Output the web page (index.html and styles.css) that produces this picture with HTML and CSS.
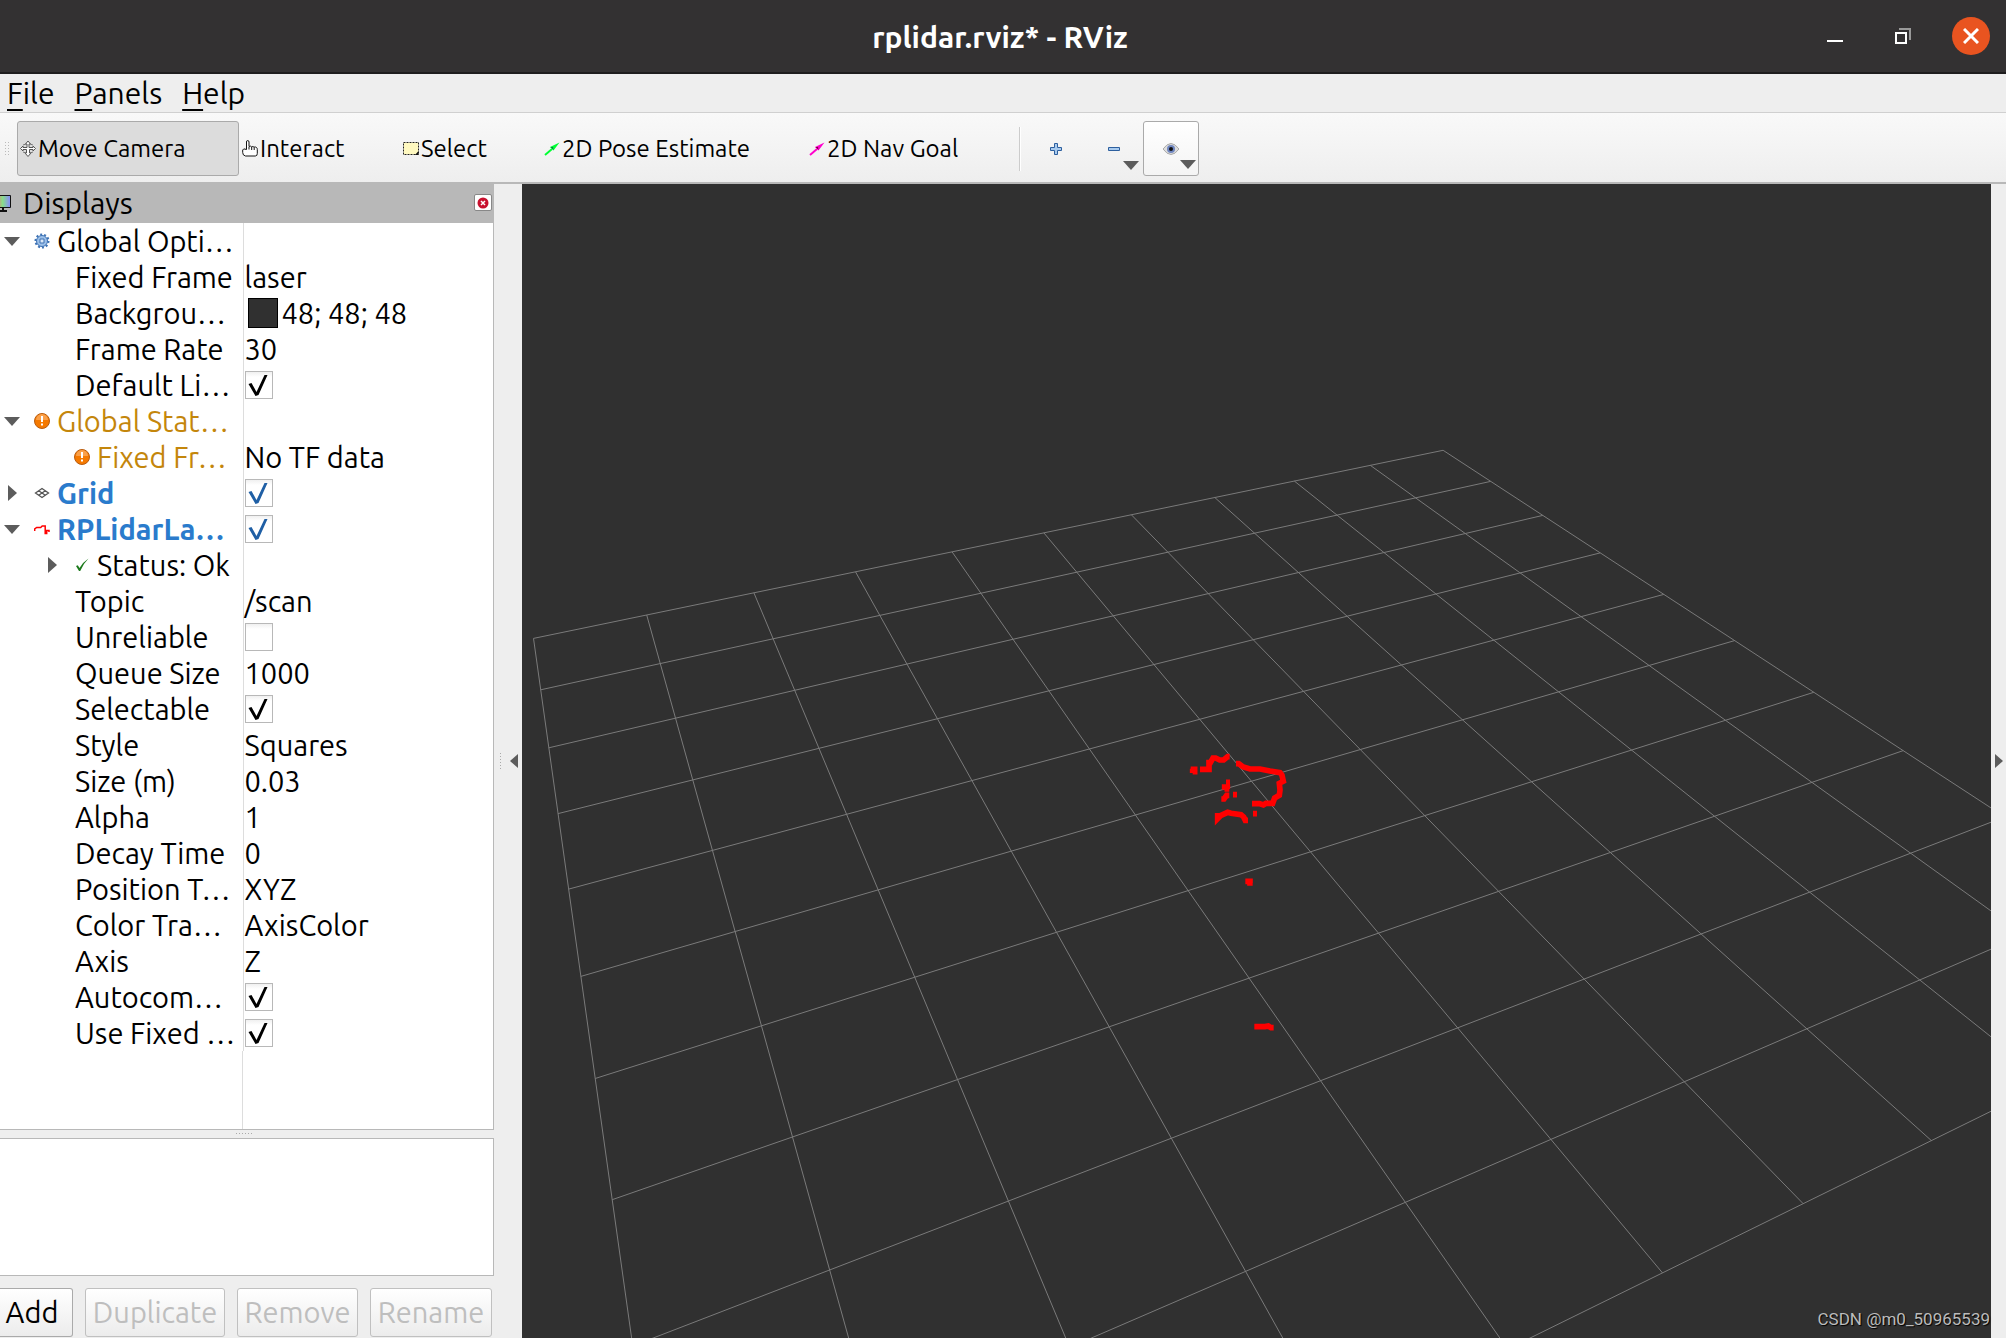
FILE: index.html
```html
<!DOCTYPE html>
<html lang="en">
<head>
<meta charset="utf-8">
<title>rplidar.rviz* - RViz</title>
<link rel="stylesheet" href="styles.css">
</head>
<body>
<header class="titlebar">
  <h1 class="title">rplidar.rviz* - RViz</h1>
  <div class="window-controls">
    <button class="win-btn" aria-label="Minimize"><svg width="16" height="16" viewBox="0 0 16 16"><path d="M0 13h16" stroke="#fff" stroke-width="2"/></svg></button>
    <button class="win-btn" aria-label="Restore"><svg width="16" height="16" viewBox="0 0 16 16" fill="none" stroke-width="2"><path d="M4 1h11v11" stroke="#999"/><path d="M1 5h10v10H1z" stroke="#fff"/></svg></button>
    <button class="win-btn win-close" aria-label="Close"><svg width="16" height="16" viewBox="0 0 16 16"><path d="M1 1l14 14M15 1L1 15" stroke="#fff" stroke-width="3"/></svg></button>
  </div>
</header>

<nav class="menubar">
  <button class="menu"><u>F</u>ile</button>
  <button class="menu"><u>P</u>anels</button>
  <button class="menu"><u>H</u>elp</button>
</nav>

<div class="toolbar" role="toolbar">
  <span class="toolbar-grip"></span>
  <button class="tool tool-move active"><svg class="tool-icon" viewBox="0 0 16 18"><path d="M8 1l2.500 3H9v3.500h4V6l2.500 2.500L13 11V9.500H9.500V13H11l-3 3.500L5 13h1.500V9.500H3V11L.5 8.500 3 6v1.500h4V4H5.500z" fill="#fff" stroke="#555"/><path d="M3 5l3-1M13 5l-3-1M3 12l3 1M13 12l-3 1" stroke="#777"/></svg>Move Camera</button>
  <button class="tool tool-interact"><svg class="tool-icon" viewBox="0 0 16 18"><path d="M4.500 9.500V2q0-1.500 1.200-1.500T7 2v4.500q1.400-1 2.500.3 1.400-.8 2.500.4 1.500-.6 2.500.3.800.7.800 2v4q0 2.500-2 2.500H3.500Q.7 15.500.7 12.500V10q.3-2 3.800-.5z" fill="#fff" stroke="#111"/><path d="M7 7v2.500m2.700-2.500v3m2.500-2.500V10" stroke="#111" fill="none"/></svg>Interact</button>
  <button class="tool tool-select"><svg class="tool-icon" viewBox="0 0 16 18"><path d="M.5 2.500h15v12H.5z" fill="#fff9c0" stroke="#222" stroke-dasharray="2 1"/><path d="M15.500 11v4H12z" fill="#111"/></svg>Select</button>
  <button class="tool tool-pose"><svg class="tool-icon" viewBox="0 0 16 18"><path d="M1 15l7-6" stroke="#0f3" stroke-width="2"/><path d="M15.500 2.500L6 7l3.500 3.500z" fill="#0f3"/><path d="M6.500 7l3 3-.5-3z" fill="#084"/></svg>2D Pose Estimate</button>
  <button class="tool tool-nav"><svg class="tool-icon" viewBox="0 0 16 18"><path d="M1 15l7-6" stroke="#f0c" stroke-width="2"/><path d="M15.500 2.500L6 7l3.500 3.500z" fill="#f0c"/><path d="M6.500 7l3 3-.5-3z" fill="#704"/></svg>2D Nav Goal</button>
  <span class="toolbar-sep"></span>
  <button class="icon-tool" aria-label="Add tool"><svg width="14" height="14" viewBox="0 0 14 14"><path d="M5.500 1.500h3v4h4v3h-4v4h-3v-4h-4v-3h4z" fill="#a8caee" stroke="#2d5f9e"/></svg></button>
  <button class="icon-tool" aria-label="Remove tool"><svg width="14" height="14" viewBox="0 0 14 14"><path d="M1.500 5.500h11v3h-11z" fill="#a8caee" stroke="#2d5f9e"/></svg><i class="drop"></i></button>
  <button class="icon-tool raised" aria-label="Tool visibility"><svg width="16" height="14" viewBox="0 0 16 14"><path d="M0 7q8-11 16 0q-8 11-16 0z" fill="#ddd" stroke="#aaa"/><circle cx="8" cy="7" r="4" fill="#6f86c0"/><circle cx="8" cy="7" r="2" fill="#111"/></svg><i class="drop"></i></button>
</div>

<main class="workspace">
  <section class="dock">
    <div class="dock-title">
      <svg width="16" height="22" viewBox="0 0 16 22"><defs><linearGradient id="screen"><stop offset="0" stop-color="#e77"/><stop offset=".45" stop-color="#8d8"/><stop offset="1" stop-color="#88f"/></linearGradient></defs><path d="M-4 3.500h14.500v12H-4z" fill="url(#screen)" stroke="#111"/><path d="M3 16v3M-1 19h8" stroke="#111" stroke-width="2"/></svg>
      <h2 class="dock-name">Displays</h2>
      <button class="dock-close" aria-label="Close Displays"><svg width="12" height="12" viewBox="0 0 12 12"><circle cx="6" cy="6" r="5.500" fill="#c8102e"/><path d="M4 4l4 4M8 4L4 8" stroke="#fff" stroke-width="1.500"/></svg></button>
    </div>
    <div class="tree-box">
    <table class="tree">
      <tbody>
      <tr><th scope="row"><div class="name"><span class="arrow open"></span><svg class="row-icon" viewBox="0 0 16 16"><circle cx="8" cy="8" r="5.500" fill="#9bbfe8" stroke="#3f73b5"/><circle cx="8" cy="8" r="6.500" fill="none" stroke="#3f73b5" stroke-width="2" stroke-dasharray="2 2"/><path d="M6 6h4v4H6z" fill="#dce9f8" stroke="#3f73b5"/></svg>Global Opti…</div></th><td></td></tr>
      <tr><th scope="row"><div class="name leaf">Fixed Frame</div></th><td>laser</td></tr>
      <tr><th scope="row"><div class="name leaf">Backgrou…</div></th><td><div class="color"><span class="swatch"></span>48; 48; 48</div></td></tr>
      <tr><th scope="row"><div class="name leaf">Frame Rate</div></th><td>30</td></tr>
      <tr><th scope="row"><label class="name leaf" for="light">Default Li…</label></th><td><input class="check" type="checkbox" id="light" checked></td></tr>
      <tr><th scope="row"><div class="name warn"><span class="arrow open"></span><svg class="row-icon" viewBox="0 0 16 16"><circle cx="8" cy="8" r="7.500" fill="#f57900" stroke="#b85c10"/><path d="M2 7a6 6 0 0 1 12 0z" fill="#faa04a"/><path d="M8 3v6M8 10.500v2" stroke="#fff" stroke-width="2"/></svg>Global Stat…</div></th><td></td></tr>
      <tr><th scope="row"><div class="name nested warn"><svg class="row-icon" viewBox="0 0 16 16"><circle cx="8" cy="8" r="7.500" fill="#f57900" stroke="#b85c10"/><path d="M2 7a6 6 0 0 1 12 0z" fill="#faa04a"/><path d="M8 3v6M8 10.500v2" stroke="#fff" stroke-width="2"/></svg>Fixed Fr…</div></th><td>No TF data</td></tr>
      <tr><th scope="row"><label class="name display" for="grid-on"><span class="arrow"></span><svg class="row-icon" viewBox="0 0 16 16"><path d="M1.500 8L8 3.500 14.500 8 8 12.500zM4.700 5.700l6.600 4.600M11.300 5.700L4.700 10.300" fill="none" stroke="#555" stroke-width="1.300"/></svg>Grid</label></th><td><input class="check blue" type="checkbox" id="grid-on" checked></td></tr>
      <tr><th scope="row"><label class="name display" for="scan-on"><span class="arrow open"></span><svg class="row-icon" viewBox="0 0 16 16"><path d="M.7 10V8l2-1.500h4l1.500-1.500h3v7.500h1.500V9.500H15V11" fill="none" stroke="#f00" stroke-width="1.500"/></svg>RPLidarLa…</label></th><td><input class="check blue" type="checkbox" id="scan-on" checked></td></tr>
      <tr><th scope="row"><div class="name nested"><span class="arrow"></span><svg class="row-icon" viewBox="0 0 16 16"><path d="M2 9l1.800-.8 1.700 2.800Q9 5 14.500 1.500 9 7 6.200 14H5z" fill="#1c7a1c"/></svg>Status: Ok</div></th><td></td></tr>
      <tr><th scope="row"><div class="name leaf">Topic</div></th><td>/scan</td></tr>
      <tr><th scope="row"><label class="name leaf" for="unreliable">Unreliable</label></th><td><input class="check" type="checkbox" id="unreliable"></td></tr>
      <tr><th scope="row"><div class="name leaf">Queue Size</div></th><td>1000</td></tr>
      <tr><th scope="row"><label class="name leaf" for="selectable">Selectable</label></th><td><input class="check" type="checkbox" id="selectable" checked></td></tr>
      <tr><th scope="row"><div class="name leaf">Style</div></th><td>Squares</td></tr>
      <tr><th scope="row"><div class="name leaf">Size (m)</div></th><td>0.03</td></tr>
      <tr><th scope="row"><div class="name leaf">Alpha</div></th><td>1</td></tr>
      <tr><th scope="row"><div class="name leaf">Decay Time</div></th><td>0</td></tr>
      <tr><th scope="row"><div class="name leaf">Position T…</div></th><td>XYZ</td></tr>
      <tr><th scope="row"><div class="name leaf">Color Tra…</div></th><td>AxisColor</td></tr>
      <tr><th scope="row"><div class="name leaf">Axis</div></th><td>Z</td></tr>
      <tr><th scope="row"><label class="name leaf" for="autocompute">Autocom…</label></th><td><input class="check" type="checkbox" id="autocompute" checked></td></tr>
      <tr><th scope="row"><label class="name leaf" for="use-fixed">Use Fixed …</label></th><td><input class="check" type="checkbox" id="use-fixed" checked></td></tr>
      </tbody>
    </table>
    <div class="tree-rest"></div>
    </div>
    <div class="splitter"><span class="splitter-grip"></span></div>
    <div class="help-box"></div>
    <div class="actions">
      <button class="action add">Add</button>
      <button class="action duplicate" disabled>Duplicate</button>
      <button class="action remove" disabled>Remove</button>
      <button class="action rename" disabled>Rename</button>
    </div>
  </section>

  <div class="gutter gutter-left">
    <span class="gutter-grip"></span>
    <button class="collapse collapse-left" aria-label="Hide left panels"></button>
  </div>

  <section class="view">
    <svg class="scene" viewBox="0 0 1469 1154" preserveAspectRatio="xMidYMid slice">
      <path id="ground" class="ground"/>
      <g class="scan" transform="translate(638 546) scale(.3333)">
        <path d="M92 118h12v7h-6v4M120 118h27v-20h4l8-14h8l12 6h12l12-10h6"/>
        <path d="M228 101h8l14 10 20 6h30l30 6 30 5 6 8 4 18-12 6 2 20-2 16-14 8-6 16h-20l-8 5-12-4h-22"/>
        <path d="M198 157h12M194 163v8h8v6h6M208 196h-8l-8 11h-8M219 194h12M279 251h12"/>
        <path d="M173 249v17l10-10 20-9 10 3 30 4 8 7 5 10h8"/>
      </g>
      <g class="scan" transform="translate(678 666) scale(.3333)">
        <path d="M136 94h14v5h8M163 530h32l10-2 8 5h8"/>
      </g>
    </svg>
    <span class="watermark">CSDN @m0_50965539</span>
  </section>

  <div class="gutter gutter-right">
    <button class="collapse collapse-right" aria-label="Show right panels"></button>
  </div>
</main>
<script src="ground.js"></script>
</body>
</html>
```
FILE: ground.js
```js
// Projects the 10 x 10 cell ground plane through the camera onto the scene.
const CELLS = 10;

function project(u, v) {
  const w = 0.02788 * u - 0.0564 * v + 1;
  const x = (116.64 * u + 6.157 * v + 11.5) / w;
  const y = (-11.381 * u + 22.903 * v + 454.4) / w;
  return x.toFixed(1) + " " + y.toFixed(1);
}

let d = "";
for (let i = 0; i <= CELLS; i++) {
  d += "M" + project(i, 0) + "L" + project(i, CELLS);
  d += "M" + project(0, i) + "L" + project(CELLS, i);
}
document.getElementById("ground").setAttribute("d", d);
```
FILE: styles.css
```css
* { box-sizing: border-box; }

body {
  margin: 0;
  height: 100vh;
  display: flex;
  flex-direction: column;
  overflow: hidden;
  background: #eee;
  color: #000;
  font: 29px/36px Ubuntu, "Noto Sans", sans-serif;
}

button {
  margin: 0;
  padding: 0;
  border: 0;
  background: none;
  color: inherit;
  font: inherit;
}

svg { display: block; flex: none; }

/* Title bar */
.titlebar {
  flex: none;
  display: grid;
  grid-template-columns: 1fr auto 1fr;
  align-items: center;
  height: 74px;
  padding: 0 16px 0 10px;
  background: #333132;
  border-bottom: 2px solid #1e1d1e;
  color: #fff;
}
.title {
  grid-column: 2;
  margin: 0;
  padding-top: 2px;
  font-size: 30px;
  line-height: 36px;
  font-weight: 700;
}
.window-controls {
  display: flex;
  justify-content: flex-end;
  align-items: center;
  gap: 30px;
}
.win-btn {
  display: grid;
  place-items: center;
  width: 38px;
  height: 38px;
}
.win-close { border-radius: 50%; background: #e95420; }

/* Menu bar */
.menubar {
  flex: none;
  display: flex;
  gap: 20px;
  height: 39px;
  padding: 1px 7px;
  border-bottom: 1px solid #d0d0d0;
  font-size: 30px;
}
.menu u {
  text-decoration-thickness: 2px;
  text-underline-offset: 5px;
}

/* Tool bar */
.toolbar {
  flex: none;
  display: flex;
  align-items: center;
  height: 71px;
  padding: 2px 0 0 4px;
  background: linear-gradient(#f9f9f9, #eee);
  border-bottom: 2px solid #b8b8b8;
}
.toolbar-grip {
  width: 6px;
  height: 16px;
  margin-right: 7px;
  background: radial-gradient(circle, #bbb 1px, transparent 1px) 0 0 / 3px 3px;
}
.tool {
  display: flex;
  align-items: center;
  gap: 2px;
  height: 55px;
  padding-left: 2px;
  border: 1px solid transparent;
  border-radius: 3px;
  font-size: 24px;
  white-space: nowrap;
}
.tool-icon { width: 16px; height: 18px; }
.tool.active { background: #dcdcdc; border-color: #aaa; }
.tool-move { width: 222px; }
.tool-interact { width: 161px; }
.tool-select { width: 141px; }
.tool-pose { width: 265px; }
.tool-nav { width: 213px; }
.toolbar-sep {
  width: 2px;
  height: 44px;
  margin-right: 6px;
  background: linear-gradient(90deg, #ccc 50%, #fff 50%);
}
.icon-tool {
  position: relative;
  display: grid;
  place-items: center;
  width: 58px;
  height: 55px;
}
.raised {
  width: 56px;
  border: 1px solid #aaa;
  border-radius: 3px;
  background: linear-gradient(#fff, #f4f4f4);
}
.drop {
  position: absolute;
  right: 4px;
  bottom: 6px;
  border: 8px solid transparent;
  border-top: 9px solid #5c5c5c;
  border-bottom: 0;
}
.raised .drop { right: 2px; }

/* Workspace */
.workspace {
  flex: 1;
  min-height: 0;
  display: flex;
}
.dock {
  flex: none;
  width: 494px;
  display: flex;
  flex-direction: column;
}
.dock-title {
  flex: none;
  display: flex;
  align-items: center;
  gap: 7px;
  height: 39px;
  padding: 0 2px 2px 0;
  background: #b8b8b8;
}
.dock-name {
  flex: 1;
  margin: 0;
  font-size: 30px;
  font-weight: 400;
}
.dock-close {
  display: grid;
  place-items: center;
  width: 18px;
  height: 17px;
  border: 1px solid #888;
  border-radius: 2px;
  background: #fff;
}

/* Property tree */
.tree-box {
  flex: 1;
  min-height: 0;
  display: flex;
  flex-direction: column;
  overflow: hidden;
  background: #fff;
  border: 1px solid #b8b8b8;
  border-width: 0 1px 1px 0;
}
.tree {
  width: 100%;
  table-layout: fixed;
  border-collapse: collapse;
}
.tree th {
  width: 243px;
  padding: 0;
  border-right: 1px solid #ddd;
  font-weight: 400;
  text-align: left;
}
.tree td { padding: 0 0 0 1px; }
.tree tr { height: 36px; }
.tree-rest {
  flex: 1;
  width: 243px;
  border-right: 1px solid #ddd;
}
.name {
  display: flex;
  align-items: center;
  height: 36px;
  padding-left: 4px;
  white-space: nowrap;
}
.leaf { padding-left: 75px; }
.nested { padding-left: 44px; }
.nested .row-icon:first-child { margin-left: 30px; }
.warn { color: #c4860b; }
.display { color: #2a7bcc; font-weight: 700; }
.row-icon { width: 16px; height: 16px; margin-right: 7px; }
.arrow {
  display: grid;
  place-items: center;
  width: 16px;
  margin-right: 14px;
}
.arrow::before {
  content: "";
  border: 8px solid transparent;
  border-left: 9px solid #5c5c5c;
  border-right: 0;
}
.arrow.open::before {
  border: 8px solid transparent;
  border-top: 9px solid #5c5c5c;
  border-bottom: 0;
}
.color { display: flex; align-items: center; gap: 4px; padding-left: 3px; }
.swatch { width: 30px; height: 30px; background: #303030; border: 1px solid #000; }
.check {
  appearance: none;
  display: block;
  width: 28px;
  height: 28px;
  margin: 0;
  border: 1px solid #b8b8b8;
  background: linear-gradient(#f0f0f0, #fff 5px);
  color: #000;
}
.check.blue { color: #1f5fa5; }
.check:checked::before {
  content: "";
  display: block;
  width: 26px;
  height: 26px;
  background: currentColor;
  clip-path: polygon(3px 12px, 6px 11px, 11px 20px, 19px 3px, 22px 3px, 13px 23px, 10px 24px);
}

/* Lower half of the dock */
.splitter {
  flex: none;
  display: grid;
  place-items: start center;
  height: 8px;
  padding: 3px 4px 0 0;
}
.splitter-grip {
  width: 18px;
  height: 1px;
  background: repeating-linear-gradient(90deg, #aaa 0 1px, transparent 1px 3px);
}
.help-box {
  flex: none;
  height: 138px;
  background: #fff;
  border: 1px solid #b8b8b8;
  border-left: 0;
}
.actions {
  flex: none;
  display: flex;
  gap: 12px;
  padding: 12px 2px 1px 0;
}
.action {
  height: 49px;
  padding-bottom: 2px;
  border: 1px solid #aaa;
  border-radius: 3px;
  background: linear-gradient(#fff, #ececec);
}
.action:disabled { color: #bebebe; border-color: #c0c0c0; }
.add {
  width: 73px;
  padding-right: 8px;
  border-left: 0;
  border-radius: 0 3px 3px 0;
}
.duplicate { width: 140px; }
.remove { width: 121px; }
.rename { width: 122px; }

/* Gutters beside the 3D view */
.gutter {
  flex: none;
  display: flex;
  align-items: center;
  justify-content: flex-end;
}
.gutter-left { width: 28px; gap: 9px; padding-right: 4px; }
.gutter-right { width: 15px; padding-right: 3px; }
.gutter-grip {
  width: 1px;
  height: 16px;
  background: repeating-linear-gradient(#aaa 0 1px, transparent 1px 3px);
}
.collapse { border: 7px solid transparent; }
.collapse-left { border-right: 8px solid #5c5c5c; border-left: 0; }
.collapse-right { border-left: 8px solid #5c5c5c; border-right: 0; }

/* 3D view */
.view {
  position: relative;
  flex: 1;
  min-width: 0;
  background: #303030;
}
.scene { width: 100%; height: 100%; }
.ground { fill: none; stroke: #7a7a7a; stroke-width: 1; }
.scan { fill: none; stroke: #f00; stroke-width: 17; }
.watermark {
  position: absolute;
  right: 1px;
  bottom: 9px;
  color: #bbb;
  font: 17px/20px Roboto, sans-serif;
  text-shadow: 1px 1px 1px #000;
}
```
